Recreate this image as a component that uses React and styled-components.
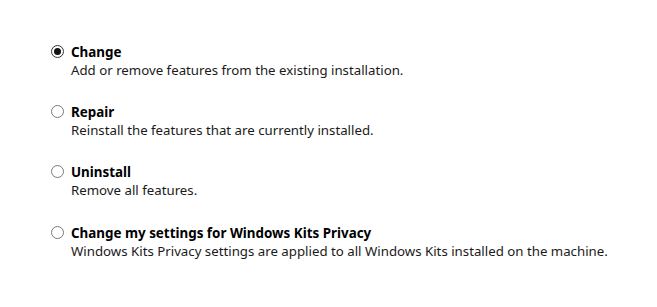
import React, { useState } from "react";
import styled, { createGlobalStyle } from "styled-components";

const Global = createGlobalStyle`
  html, body { margin: 0; padding: 0; background: #ffffff; }
  body { font-family: "Segoe UI", "Noto Sans", "Open Sans", sans-serif; color: #000; }
`;

const Page = styled.div`
  width: 657px;
  height: 307px;
  box-sizing: border-box;
  padding: 43px 0 0 51px;
  display: flex;
  flex-direction: column;
  gap: 23.7px;
`;

const Option = styled.label`
  display: grid;
  grid-template-columns: 13px auto;
  column-gap: 7px;
  align-items: start;
  cursor: default;
`;

const Radio = styled.span`
  width: 13px;
  height: 13px;
  box-sizing: border-box;
  border-radius: 50%;
  border: 1px solid ${(p) => (p.$checked ? "#333" : "#7a7a7a")};
  margin-top: 2px;
  display: flex;
  align-items: center;
  justify-content: center;
  &::after {
    content: "";
    width: 7px;
    height: 7px;
    border-radius: 50%;
    background: #111;
    display: ${(p) => (p.$checked ? "block" : "none")};
  }
`;

const Texts = styled.div`
  display: flex;
  flex-direction: column;
`;

const Title = styled.div`
  font-size: 13.4px;
  font-weight: 700;
  line-height: 18px;
  color: #000;
`;

const Desc = styled.div`
  font-size: 13.25px;
  line-height: 18.5px;
  color: #1a1a1a;
`;

const options = [
  { title: "Change", desc: "Add or remove features from the existing installation." },
  { title: "Repair", desc: "Reinstall the features that are currently installed." },
  { title: "Uninstall", desc: "Remove all features." },
  {
    title: "Change my settings for Windows Kits Privacy",
    desc: "Windows Kits Privacy settings are applied to all Windows Kits installed on the machine.",
  },
];

export default function App() {
  const [sel, setSel] = useState(0);
  return (
    <>
      <Global />
      <Page>
        {options.map((o, i) => (
          <Option key={o.title} onClick={() => setSel(i)}>
            <Radio $checked={sel === i} />
            <Texts>
              <Title>{o.title}</Title>
              <Desc>{o.desc}</Desc>
            </Texts>
          </Option>
        ))}
      </Page>
    </>
  );
}
